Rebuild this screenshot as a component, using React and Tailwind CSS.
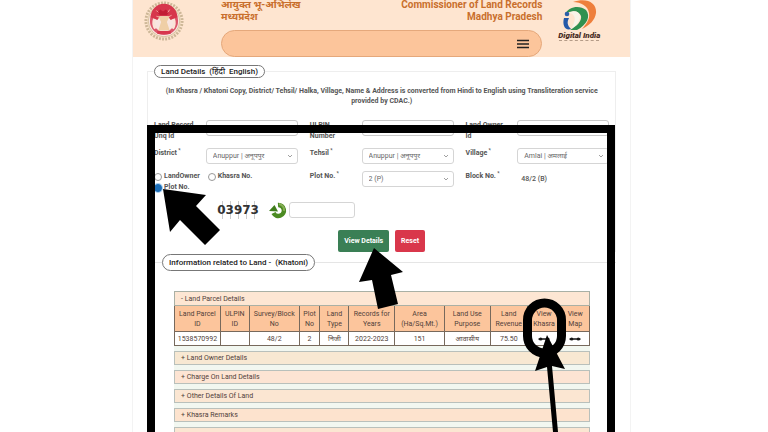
const COLUMNS = [
  { top: 'Land Parcel', bottom: 'ID', width: 'w-[11%]' },
  { top: 'ULPIN', bottom: 'ID', width: 'w-[7%]' },
  { top: 'Survey/Block', bottom: 'No', width: 'w-[12%]' },
  { top: 'Plot', bottom: 'No', width: 'w-[5%]' },
  { top: 'Land', bottom: 'Type', width: 'w-[7%]' },
  { top: 'Records for', bottom: 'Years', width: 'w-[11%]' },
  { top: 'Area', bottom: '(Ha/Sq.Mt.)', width: 'w-[12%]' },
  { top: 'Land Use', bottom: 'Purpose', width: 'w-[11%]' },
  { top: 'Land', bottom: 'Revenue', width: 'w-[9%]' },
  { top: 'View', bottom: 'Khasra', width: 'w-[8%]' },
  { top: 'View', bottom: 'Map', width: 'w-[7%]' },
]

const PARCEL = ['1538570992', '', '48/2', '2', 'निजी', '2022-2023', '151', 'आवासीय', '75.50']

const SECTIONS = [
  { title: 'Land Owner Details', color: 'bg-[#f8e8d2]' },
  { title: 'Charge On Land Details', color: 'bg-[#fde4d3]' },
  { title: 'Other Details Of Land', color: 'bg-[#fbe6d2]' },
  { title: 'Khasra Remarks', color: 'bg-[#fde3ce]' },
]

function StateEmblem() {
  return (
    <svg viewBox="0 0 44 44" className="size-[42px]" role="img" aria-label="Madhya Pradesh">
      <circle cx="22" cy="22" r="18" fill="#f3dfc4" />
      <circle cx="22" cy="22" r="19" fill="none" stroke="#cdb797" strokeWidth="3" strokeDasharray="2 1.3" />
      <circle cx="22" cy="22" r="16.500" fill="#f8e6e0" stroke="#d9c2a0" />
      <circle cx="22" cy="22" r="13" fill="none" stroke="#dc566a" strokeWidth="3.500" />
      <path d="M8 18a14 14 0 0 1 28 0l-7 3-3-4h-8l-3 4z" fill="#d7364c" />
      <path d="M15 13l3-3 3 2 3-2 3 3-2 3H18z" fill="#c21c34" />
      <path d="M14 11l2 2m12-3l-2 3m-12 4l3 1m13-2l-4 2" stroke="#f3a9a4" />
      <path d="M16 17h12l-3 6 3 9H16l3-9z" fill="#efcfa6" />
      <path d="M12 20q-2 5 1 10m19-10q2 5-1 10" fill="none" stroke="#fae4d8" strokeWidth="3" />
      <path d="M15 34h14" stroke="#d7364c" strokeWidth="3" />
    </svg>
  )
}

function DigitalIndia() {
  return (
    <div className="flex flex-col items-center">
      <svg viewBox="0 0 36 32" className="h-8 w-9" aria-hidden="true">
        <path d="M12 2C26-3 36 3 35 13c-1 7-6 12-14 16 5-6 8-10 7-16C27 6 20 2 12 2z" fill="#ee7f3c" />
        <path d="M4 14C8 6 19 5 25 10c5 6 1 15-9 20H9c7-4 12-9 11-14-2-6-10-6-16-2z" fill="#2f9150" />
        <path d="M8 13c5-3 10-2 11 3 0 5-4 10-9 13 3-5 5-10 3-13-1-2-3-3-5-3z" fill="#f8f4e8" />
        <circle cx="6" cy="14" r="2.300" fill="#2c5fa8" />
        <path d="M3 18h5c-2 4-2 7 2 11-6 2-9-4-7-11z" fill="#2559a8" />
      </svg>
      <span className="text-[8px] leading-[7px] font-black whitespace-nowrap italic text-[#4a2f26]">Digital India</span>
      <span className="mt-px h-px w-10 border-t border-dashed border-[#b59c88]" />
    </div>
  )
}

function FieldLabel({ htmlFor, children, required }) {
  return (
    <label htmlFor={htmlFor} className="w-[36%] shrink-0 font-bold">
      {children}
      {required && <sup> *</sup>}
    </label>
  )
}

function SelectBox({ id, value }) {
  return (
    <div className="relative flex-1">
      <select id={id} className="h-4 w-full appearance-none rounded-[3px] border border-[#d5d5d5] bg-white px-1.5 text-[7px] leading-3 text-[#666]">
        <option>{value}</option>
      </select>
      <svg viewBox="0 0 8 8" className="pointer-events-none absolute top-1 right-1 size-2" aria-hidden="true">
        <path d="M2 3l2 2 2-2" fill="none" stroke="#888" strokeWidth="0.800" />
      </svg>
    </div>
  )
}

function TextField({ id, first, second }) {
  return (
    <div className="flex">
      <FieldLabel htmlFor={id}>
        {first}
        <br />
        {second}
      </FieldLabel>
      <input id={id} type="text" className="h-4 min-w-0 flex-1 rounded-[3px] border border-[#c8c8c8] bg-white px-1.5" />
    </div>
  )
}

function RadioOption({ label, checked }) {
  return (
    <label className="flex items-center gap-0.5 font-bold whitespace-nowrap">
      <input
        type="radio"
        name="searchBy"
        defaultChecked={checked}
        className="size-2 shrink-0 appearance-none rounded-full border border-[#999] bg-white checked:border-[#1b6cb5] checked:bg-[#1b6cb5] checked:ring-1 checked:ring-[#a8cdf0]"
      />
      {label}
    </label>
  )
}

function ViewIcon() {
  return (
    <svg viewBox="0 0 14 8" className="mx-auto h-2 w-3.5" aria-hidden="true">
      <path d="M1 4q3-3 5 0-2 3-5 0zM8 4q2-3 5 0-3 3-5 0zM5 3.200h4v1.600H5z" fill="#151515" />
    </svg>
  )
}

function ParcelTable() {
  return (
    <table className="w-full table-fixed border-collapse text-center text-[7px] leading-[10px] text-[#51413a]">
      <colgroup>
        {COLUMNS.map((c, i) => (
          <col key={i} className={c.width} />
        ))}
      </colgroup>
      <thead>
        <tr>
          <th colSpan={11} className="h-[14px] border border-[#a9b0a5] bg-[#fde6d3] px-1.5 text-left font-normal">
            <button type="button" className="block leading-[12px]">- Land Parcel Details</button>
          </th>
        </tr>
        <tr className="bg-[#fcc59c]">
          {COLUMNS.map((c, i) => (
            <th key={i} className="h-[26px] border border-[#77695c] font-normal whitespace-nowrap">
              {c.top}
              <br />
              {c.bottom}
            </th>
          ))}
        </tr>
      </thead>
      <tbody>
        <tr className="h-[14px] bg-white">
          {PARCEL.map((v, i) => (
            <td key={i} className="border border-[#77695c]">{v}</td>
          ))}
          <td className="border border-[#77695c]">
            <button type="button" aria-label="View Khasra" className="block w-full"><ViewIcon /></button>
          </td>
          <td className="border border-[#77695c]">
            <button type="button" aria-label="View Map" className="block w-full"><ViewIcon /></button>
          </td>
        </tr>
      </tbody>
    </table>
  )
}

// Hand-drawn markers that point at the steps on the page
function Annotations() {
  return (
    <svg viewBox="0 0 768 432" className="pointer-events-none absolute inset-0 size-full" aria-hidden="true">
      <path d="M151 440V129H611V440" fill="none" stroke="#000" strokeWidth="8" />
      <path d="M163 189L206 195L196 206L220 230L205 245L180 220L170 232z" fill="#000" />
      <path d="M374 248L403 272L391 275L398 304L378 309L372 280L359 282z" fill="#000" />
      <rect x="527.500" y="303" width="34" height="50" rx="17" fill="none" stroke="#000" strokeWidth="9" />
      <path d="M547 335L565 369L552 366L558 432H553L547 367L535 371z" fill="#000" />
    </svg>
  )
}

export default function App() {
  return (
    <div className="relative h-screen overflow-hidden bg-white font-['Roboto','Noto_Sans_Devanagari','Noto_Sans',sans-serif] text-[7px] leading-[11px] text-[#555]">
      <div className="mr-[17.8%] ml-[17.2%] border-x border-[#f3f3f3]">
        <header className="flex h-[57px] justify-between bg-[#fee5d0]">
          <div className="w-22 pl-2.5">
            <StateEmblem />
          </div>
          <div className="flex flex-1 flex-col justify-end">
            <div className="mb-[7px] flex justify-between text-[10px] leading-3 font-bold text-[#c96f2c]">
              <h2>
                आयुक्त भू-अभिलेख
                <br />
                मध्यप्रदेश
              </h2>
              <h1 className="text-right">
                Commissioner of Land Records
                <br />
                Madhya Pradesh
              </h1>
            </div>
            <nav className="flex h-[27px] shrink-0 items-center justify-end rounded-full border border-[#e5a87b] bg-[#fcc59b] px-3">
              <button type="button" aria-label="Menu">
                <svg viewBox="0 0 12 10" className="h-2.5 w-3">
                  <path d="M0 1.500h12M0 5h12M0 8.500h12" stroke="#222" strokeWidth="1.500" />
                </svg>
              </button>
            </nav>
          </div>
          <div className="flex w-22 justify-center pr-3.5">
            <DigitalIndia />
          </div>
        </header>

        <main className="px-3.5 pt-2">
          <fieldset className="min-w-0 border border-b-0 border-[#eee] pr-1.5 pl-1.5">
            <legend className="rounded-full border border-[#777] px-1.5 text-[8px] leading-[11px] font-medium whitespace-pre text-[#222]">
              Land Details  (हिंदी  English)
            </legend>
            <p className="px-2 pt-2 text-center leading-[10px] font-bold">
              (In Khasra / Khatoni Copy, District/ Tehsil/ Halka, Village, Name &amp; Address is converted from Hindi to English using Transliteration service provided by CDAC.)
            </p>

            <form className="pt-3.5">
              <div className="grid grid-cols-3 gap-x-3">
                <TextField id="recordId" first="Land Record" second="Unq Id" />
                <TextField id="ulpin" first="ULPIN" second="Number" />
                <TextField id="ownerId" first="Land Owner" second="Id" />
              </div>
              <div className="mt-1.5 grid grid-cols-3 gap-x-3 gap-y-[7px]">
                <div className="flex">
                  <FieldLabel htmlFor="district" required>District</FieldLabel>
                  <SelectBox id="district" value="Anuppur | अनूपपुर" />
                </div>
                <div className="flex">
                  <FieldLabel htmlFor="tehsil" required>Tehsil</FieldLabel>
                  <SelectBox id="tehsil" value="Anuppur | अनूपपुर" />
                </div>
                <div className="flex">
                  <FieldLabel htmlFor="village" required>Village</FieldLabel>
                  <SelectBox id="village" value="Amlai | अमलाई" />
                </div>
                <div className="grid grid-cols-[auto_1fr] gap-x-2">
                  <RadioOption label="LandOwner" />
                  <RadioOption label="Khasra No." />
                  <RadioOption label="Plot No." checked />
                </div>
                <div className="flex">
                  <FieldLabel htmlFor="plot" required>Plot No.</FieldLabel>
                  <SelectBox id="plot" value="2 (P)" />
                </div>
                <div className="flex">
                  <span className="w-[36%] shrink-0 font-bold">Block No.<sup> *</sup></span>
                  <output className="px-1 pt-[3px] font-medium">48/2 (B)</output>
                </div>
              </div>

              <div className="mt-2 flex items-center pl-[61px]">
                <span className="flex h-4.5 w-[46px] items-center justify-center bg-[repeating-linear-gradient(90deg,transparent_0,transparent_7px,#ccc_7px,#ccc_8px)] font-['DejaVu_Sans'] text-[12px] leading-4 font-bold text-[#333]">
                  03973
                </span>
                <button type="button" aria-label="Refresh captcha" className="ml-2">
                  <svg viewBox="0 0 18 18" className="size-4.5">
                    <path d="M9 4a5.500 5.500 0 1 1-4.500 8" fill="none" stroke="#4b8b22" strokeWidth="4.500" />
                    <path d="M0 10L5.500 4L9 10.500z" fill="#3f7d1c" />
                    <path d="M10 3a6 6 0 0 1 5 7" fill="none" stroke="#86ad54" strokeWidth="2" />
                  </svg>
                </button>
                <input type="text" aria-label="Captcha" className="ml-0.5 h-4 w-[66px] rounded-[3px] border border-[#d5d5d5] bg-white px-1" />
              </div>

              <div className="mt-[11px] flex justify-center gap-1.5 text-[7px] font-bold text-white">
                <button type="button" className="h-[22px] rounded-xs bg-[#3a7f55] px-1.5">View Details</button>
                <button type="button" className="h-[22px] rounded-xs bg-[#d9374b] px-1.5">Reset</button>
              </div>
            </form>
          </fieldset>

          <fieldset className="mt-0.5 ml-2 min-w-0 border-t border-[#e5e5e5] pr-6.5 pl-[19px]">
            <legend className="-ml-3 rounded-full border border-[#777] px-1.5 text-[8px] leading-[15px] font-medium whitespace-pre text-[#222]">
              Information related to Land -  (Khatoni)
            </legend>
            <div className="pt-5">
              <ParcelTable />
              <div className="flex flex-col gap-[5px] bg-[#f2f7f0] pt-[5px]">
                {SECTIONS.map((s) => (
                  <button
                    key={s.title}
                    type="button"
                    className={`h-[14px] border border-[#b9c0bb] px-1.5 text-left text-[7px] leading-[12px] font-normal text-[#51413a] ${s.color}`}
                  >
                    + {s.title}
                  </button>
                ))}
                <div className="h-[14px] border border-[#b9c0bb] bg-[#fbe6d2]" />
              </div>
            </div>
          </fieldset>
        </main>
      </div>
      <Annotations />
    </div>
  )
}
